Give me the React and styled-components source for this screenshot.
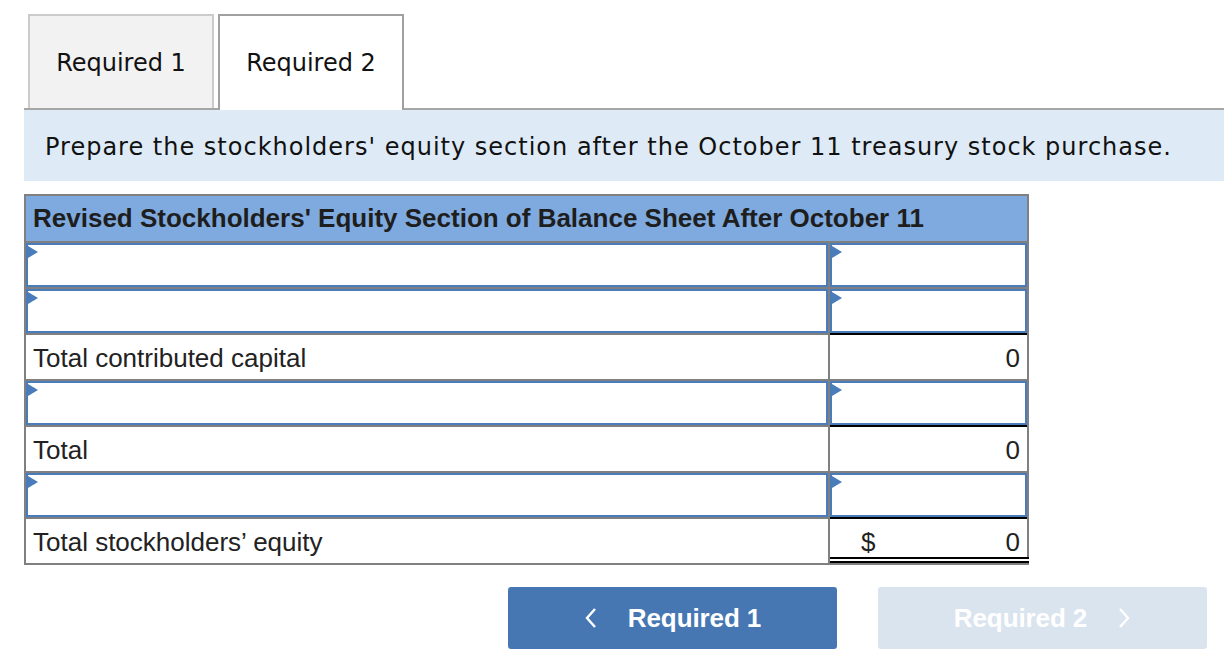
import React from 'react';
import styled, {createGlobalStyle} from 'styled-components';

const GlobalStyle = createGlobalStyle`
  html, body {
    margin: 0;
    padding: 0;
    background: #ffffff;
  }
`;

const Page = styled.div`
  width: 1224px;
  height: 666px;
  padding: 14px 0 0 24px;
  box-sizing: border-box;
  overflow: hidden;
`;

const TabBar = styled.div`
  display: flex;
  gap: 4px;
  padding-left: 4px;
  border-bottom: 2px solid #a6a6a6;
  height: 94px;
`;

const Tab = styled.div`
  width: 186px;
  height: ${p => (p.active ? '96px' : '94px')};
  box-sizing: border-box;
  display: flex;
  align-items: center;
  justify-content: center;
  font-family: "DejaVu Sans", Verdana, sans-serif;
  font-size: 24px;
  color: #111;
  background: ${p => (p.active ? '#ffffff' : '#f2f2f2')};
  border: 2px solid ${p => (p.active ? '#a0a0a0' : '#cbcbcb')};
  border-bottom: none;
  padding-top: ${p => (p.active ? '0' : '2px')};
`;

const Instruction = styled.div`
  background: #deebf7;
  height: 71px;
  display: flex;
  align-items: center;
  padding: 3px 0 0 21px;
  box-sizing: border-box;
  font-family: "DejaVu Sans", Verdana, sans-serif;
  font-size: 24px;
  letter-spacing: 1px;
  color: #111;
`;

const Sheet = styled.div`
  margin-top: 13px;
  width: 1005px;
  border: 2px solid #808080;
  box-sizing: border-box;
  font-family: "Liberation Sans", Arial, sans-serif;
  color: #222;
`;

const Header = styled.div`
  background: #7faadf;
  height: 45px;
  display: flex;
  align-items: center;
  padding-left: 7px;
  font-weight: bold;
  font-size: 26px;
  color: #1e1e1e;
`;

const Row = styled.div`
  display: grid;
  grid-template-columns: 802px 2px 197px;
  height: 46px;
  border-top: 2px solid #808080;
  box-sizing: border-box;
`;

const Divider = styled.div`
  background: #808080;
`;

const LabelCell = styled.div`
  display: flex;
  align-items: center;
  padding: 2px 0 0 7px;
  font-size: 26px;
`;

const ValueCell = styled.div`
  display: flex;
  align-items: center;
  justify-content: space-between;
  padding: 2px 7px 0 31px;
  font-size: 26px;
  border-top: ${p => (p.topRule ? '2px solid #000' : 'none')};
  margin-top: ${p => (p.topRule ? '-2px' : '0')};
  position: relative;
  &::after {
    content: '';
    display: ${p => (p.doubleRule ? 'block' : 'none')};
    position: absolute;
    left: 0;
    right: -2px;
    bottom: 0;
    height: 2px;
    border-top: 2px solid #000;
    border-bottom: 2px solid #000;
    background: #fff;
  }
`;

const InputBox = styled.div`
  position: relative;
  border: 2px solid #4a7bba;
  box-sizing: border-box;
  background: #fff;
  &::before {
    content: '';
    position: absolute;
    top: 1px;
    left: 0;
    border-top: 6px solid transparent;
    border-bottom: 6px solid transparent;
    border-left: 10px solid #4a7bba;
  }
`;

const Footer = styled.div`
  display: flex;
  justify-content: flex-end;
  gap: 41px;
  padding-right: 17px;
  margin-top: 22px;
`;

const NavButton = styled.div`
  width: 329px;
  height: 62px;
  border-radius: 3px;
  background: ${p => (p.disabled ? '#dae4ef' : '#4677b3')};
  color: #ffffff;
  display: flex;
  align-items: center;
  justify-content: center;
  gap: 30px;
  font-family: "Liberation Sans", Arial, sans-serif;
  font-weight: bold;
  font-size: 26px;
  letter-spacing: -0.1px;
`;

const Chevron = ({dir}) => (
  <svg width="14" height="22" viewBox="0 0 14 22">
    <polyline
      points={dir === 'left' ? '11,2 3,11 11,20' : '3,2 11,11 3,20'}
      fill="none"
      stroke="#fff"
      strokeWidth="2.4"
    />
  </svg>
);

const rows = [
  {input: true},
  {input: true},
  {label: 'Total contributed capital', value: '0', topRule: true},
  {input: true},
  {label: 'Total', value: '0', topRule: true},
  {input: true},
  {label: 'Total stockholders\u2019 equity', value: '0', dollar: true, topRule: true, doubleRule: true},
];

const App = () => {
  return (
    <Page>
      <GlobalStyle/>
      <TabBar>
        <Tab>Required 1</Tab>
        <Tab active>Required 2</Tab>
      </TabBar>
      <Instruction>
        Prepare the stockholders' equity section after the October 11 treasury stock purchase.
      </Instruction>
      <Sheet>
        <Header>Revised Stockholders' Equity Section of Balance Sheet After October 11</Header>
        {rows.map((r, i) => (
          <Row key={i}>
            {r.input ? <InputBox/> : <LabelCell>{r.label}</LabelCell>}
            <Divider/>
            {r.input ? (
              <InputBox/>
            ) : (
              <ValueCell topRule={r.topRule} doubleRule={r.doubleRule}>
                <span>{r.dollar ? '$' : ''}</span>
                <span>{r.value}</span>
              </ValueCell>
            )}
          </Row>
        ))}
      </Sheet>
      <Footer>
        <NavButton>
          <Chevron dir="left"/>
          <span>Required 1</span>
        </NavButton>
        <NavButton disabled>
          <span>Required 2</span>
          <Chevron dir="right"/>
        </NavButton>
      </Footer>
    </Page>
  );
};

export default App;
